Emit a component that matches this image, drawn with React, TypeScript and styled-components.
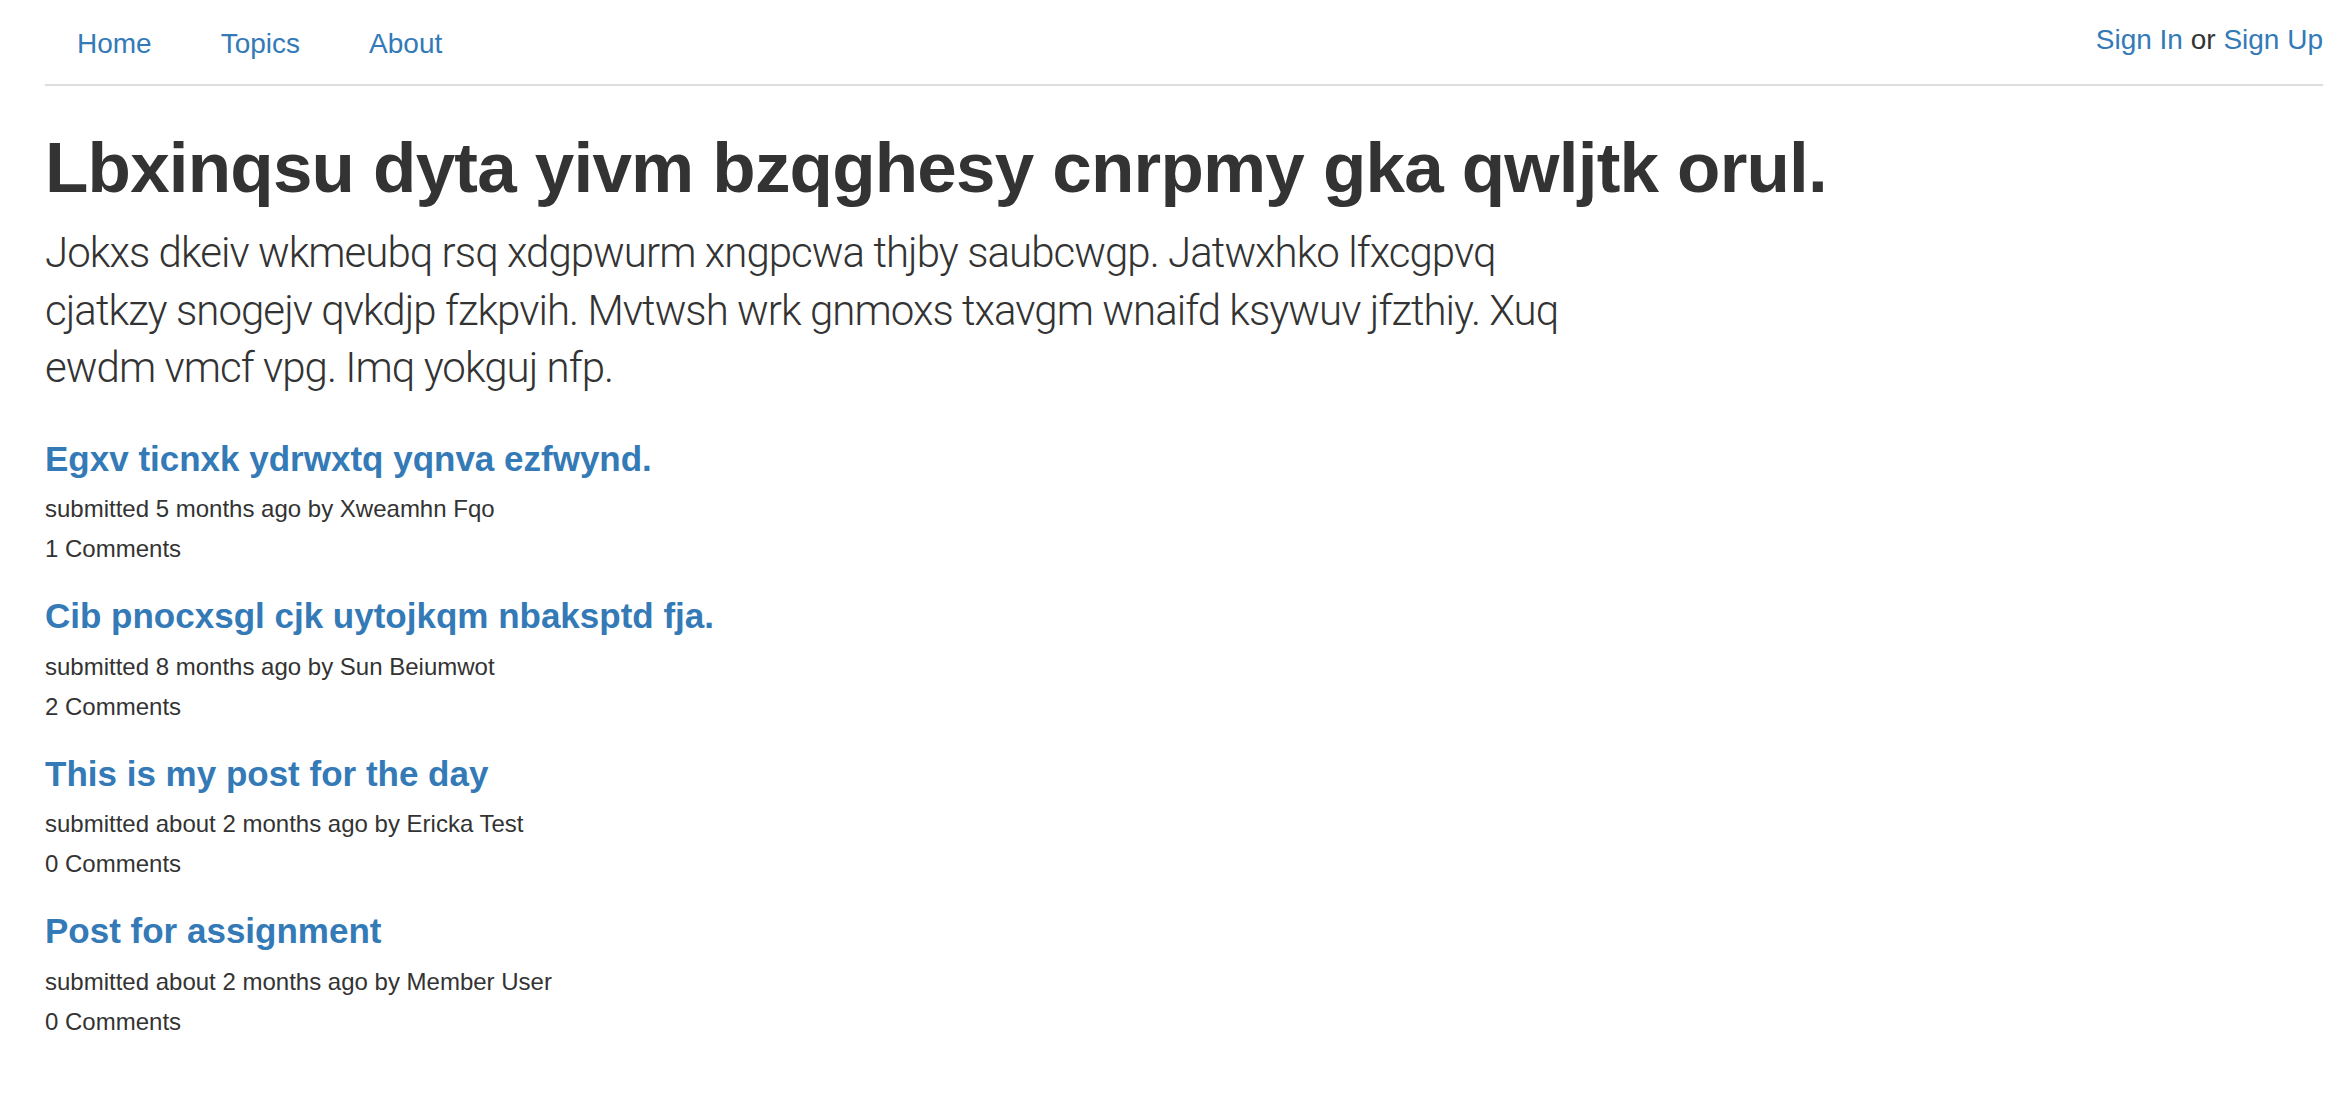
import styled, { createGlobalStyle } from 'styled-components'

const GlobalStyle = createGlobalStyle`
  html, body {
    margin: 0;
    padding: 0;
    background: #fff;
  }

  body {
    color: #333;
    font-family: "Liberation Sans", Arial, Helvetica, sans-serif;
  }
`

const Page = styled.div`
  padding: 0 29px 0 45px;
`

const Header = styled.header`
  align-items: flex-start;
  border-bottom: 2px solid #ddd;
  display: flex;
  height: 84px;
  justify-content: space-between;
`

const NavList = styled.ul`
  display: flex;
  gap: 9px;
  list-style: none;
  margin: 0;
  padding: 24px 0 0 2px;
`

const NavLink = styled.a`
  color: #337ab7;
  display: block;
  font-size: 28px;
  line-height: 40px;
  padding: 0 30px;
  text-decoration: none;
`

const Auth = styled.div`
  color: #333;
  font-size: 28px;
  line-height: 40px;
  padding-top: 20px;

  a {
    color: #337ab7;
    text-decoration: none;
  }
`

const Title = styled.h1`
  font-size: 71px;
  font-weight: 700;
  letter-spacing: -0.8px;
  line-height: 1.1;
  margin: 43px 0 17px;
`

const Lead = styled.p`
  font-family: Roboto, "Liberation Sans", sans-serif;
  font-size: 42px;
  font-weight: 300;
  letter-spacing: -0.95px;
  line-height: 57.5px;
  margin: 0 0 43px;
  max-width: 1560px;
`

const Post = styled.article`
  margin-bottom: 28px;
`

const PostTitle = styled.h4`
  font-size: 35px;
  font-weight: 700;
  line-height: 1.1;
  margin: 0 0 11px;

  a {
    color: #337ab7;
    text-decoration: none;
  }
`

const Meta = styled.div`
  font-size: 24px;
  line-height: 40px;
`

interface PostItem {
  title: string
  age: string
  author: string
  comments: number
}

const posts: PostItem[] = [
  { title: 'Egxv ticnxk ydrwxtq yqnva ezfwynd.', age: '5 months', author: 'Xweamhn Fqo', comments: 1 },
  { title: 'Cib pnocxsgl cjk uytojkqm nbaksptd fja.', age: '8 months', author: 'Sun Beiumwot', comments: 2 },
  { title: 'This is my post for the day', age: 'about 2 months', author: 'Ericka Test', comments: 0 },
  { title: 'Post for assignment', age: 'about 2 months', author: 'Member User', comments: 0 },
]

const App = () => (
  <>
    <GlobalStyle />
    <Page>
      <Header>
        <NavList>
          <li><NavLink href="#">Home</NavLink></li>
          <li><NavLink href="#">Topics</NavLink></li>
          <li><NavLink href="#">About</NavLink></li>
        </NavList>
        <Auth>
          <a href="#">Sign In</a> or <a href="#">Sign Up</a>
        </Auth>
      </Header>

      <Title>Lbxinqsu dyta yivm bzqghesy cnrpmy gka qwljtk orul.</Title>
      <Lead>
        Jokxs dkeiv wkmeubq rsq xdgpwurm xngpcwa thjby saubcwgp. Jatwxhko lfxcgpvq cjatkzy snogejv qvkdjp
        fzkpvih. Mvtwsh wrk gnmoxs txavgm wnaifd ksywuv jfzthiy. Xuq ewdm vmcf vpg. Imq yokguj nfp.
      </Lead>

      {posts.map(post => (
        <Post key={post.title}>
          <PostTitle><a href="#">{post.title}</a></PostTitle>
          <Meta>submitted {post.age} ago by {post.author}</Meta>
          <Meta>{post.comments} Comments</Meta>
        </Post>
      ))}
    </Page>
  </>
)

export default App
